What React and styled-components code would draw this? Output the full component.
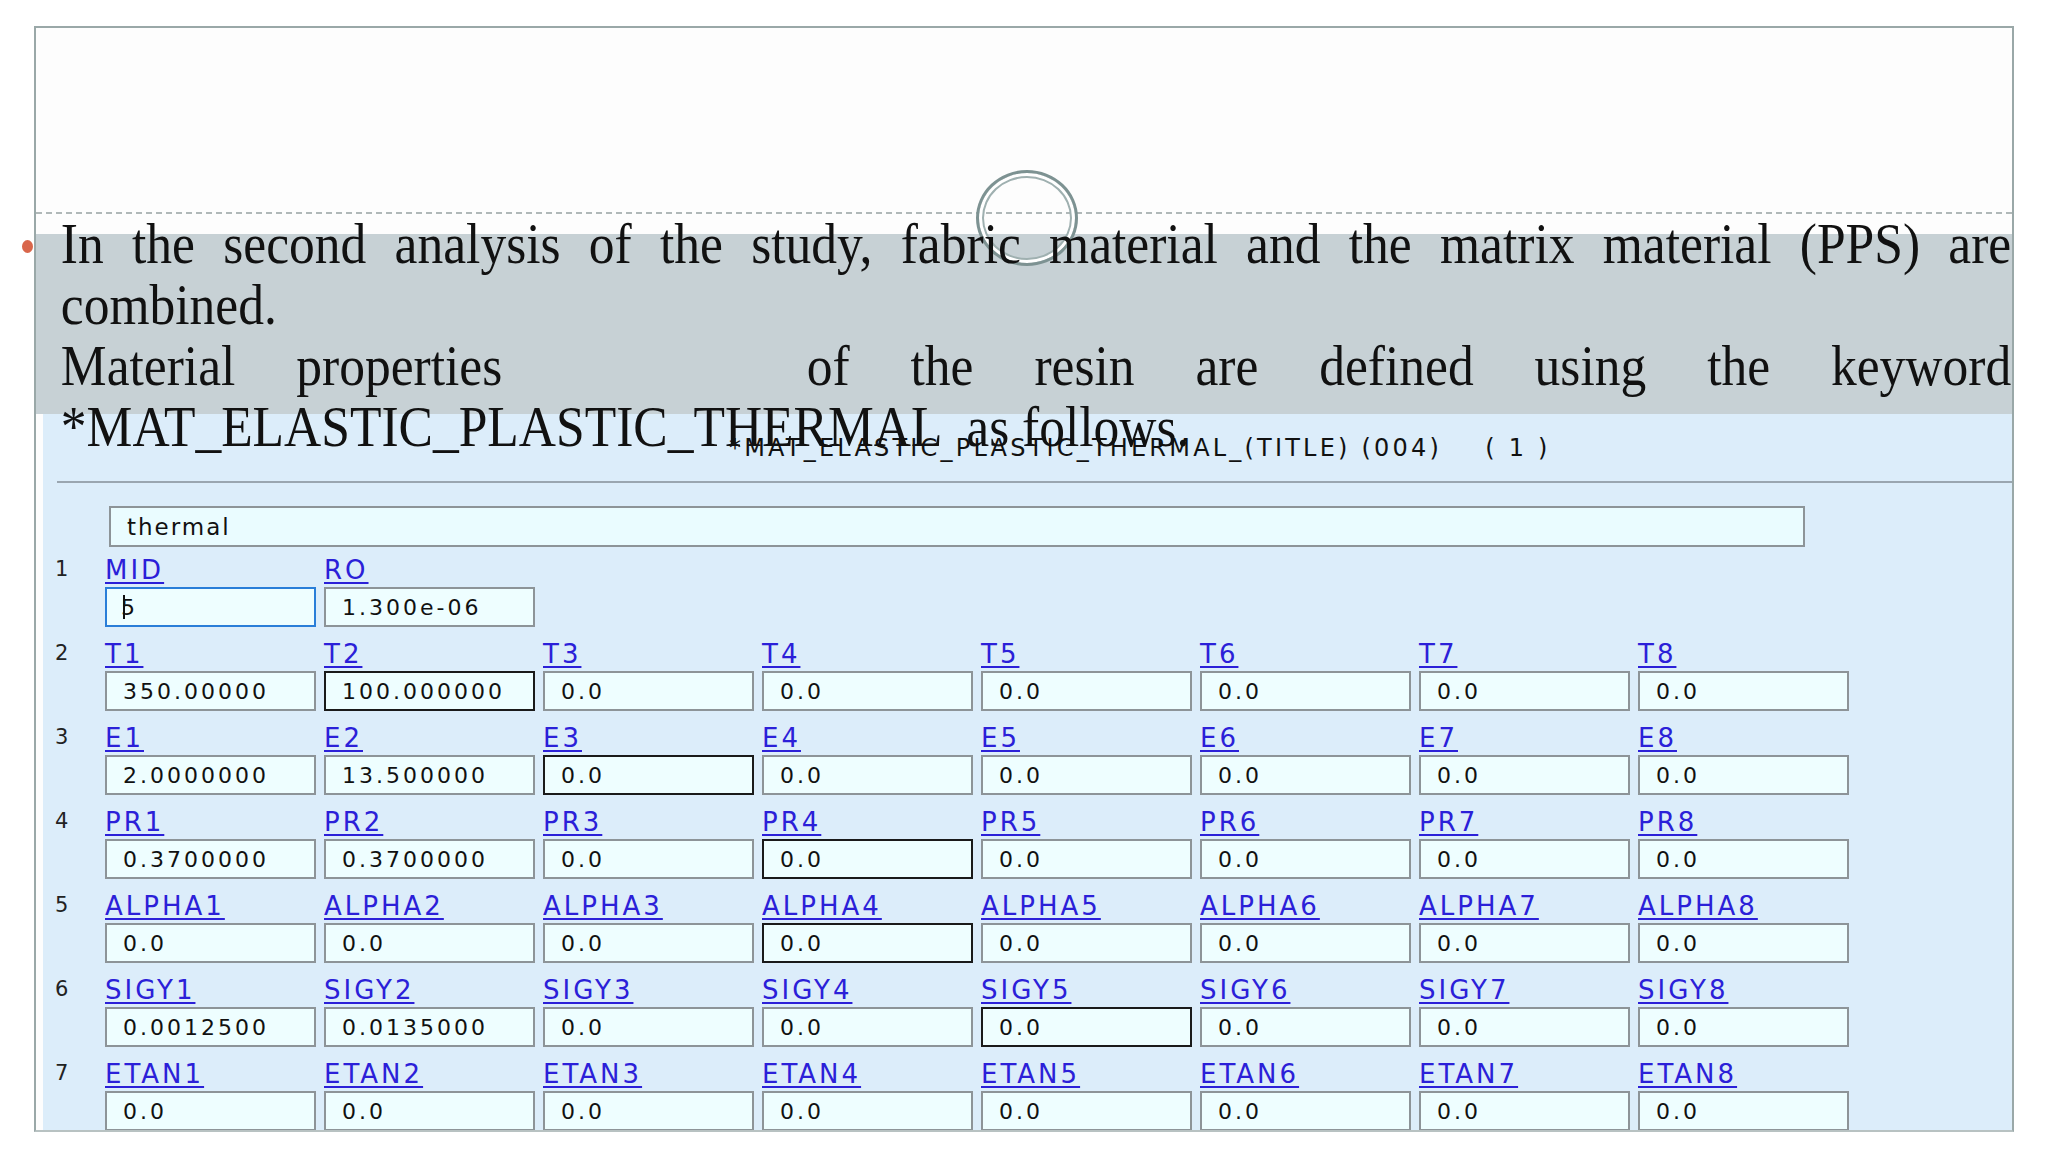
import React from 'react';
import styled, { createGlobalStyle } from 'styled-components';

const Global = createGlobalStyle`
  html, body { margin: 0; background: #ffffff; }
  body { width: 2048px; height: 1152px; overflow: hidden; }
`;

const Frame = styled.div`
  position: relative;
  margin: 26px 0 0 34px;
  width: 1980px;
  height: 1106px;
  box-sizing: border-box;
  border: 2px solid #9aa8a8;
  border-bottom-color: #b8c2c2;
  background: #fdfdfd;
  display: flex;
  flex-direction: column;
`;

const Header = styled.div`
  height: 184px;
  border-bottom: 2px dashed #b0b8b8;
  flex: none;
`;

const Ring = styled.div`
  position: absolute;
  left: 940px;
  top: 142px;
  width: 96px;
  height: 90px;
  border-radius: 50%;
  border: 3px solid #7d9292;
  box-shadow: inset 0 0 0 3px #ffffff, inset 0 0 0 5px #9fb0b0;
`;

const Bullet = styled.div`
  position: absolute;
  left: -14px;
  top: 212px;
  width: 11px;
  height: 13px;
  border-radius: 50%;
  background: #d9664b;
`;

const TextBand = styled.div`
  flex: none;
  height: 200px;
  background: linear-gradient(#fdfdfd 0 20px, #c7d1d5 20px);
`;

const Para = styled.div`
  width: 2120px;
  padding-left: 27px;
  transform: scaleX(0.92);
  transform-origin: left top;
  font-family: "Liberation Serif", "Times New Roman", serif;
  font-size: 56px;
  line-height: 61px;
  color: #111;
`;

const Line = styled.div`
  text-align: ${p => (p.$just ? 'justify' : 'left')};
  text-align-last: ${p => (p.$just ? 'justify' : 'left')};
  white-space: ${p => (p.$just ? 'normal' : 'pre')};
`;

const Panel = styled.div`
  flex: 1;
  margin-left: 7px;
  background: #dcedfa;
  overflow: hidden;
  font-family: "DejaVu Sans", Verdana, sans-serif;
`;

const Title = styled.div`
  height: 67px;
  margin-left: 14px;
  border-bottom: 2px solid #9aa6b0;
  padding-left: 672px;
  display: flex;
  align-items: center;
  font-size: 24px;
  letter-spacing: 3.2px;
  white-space: pre;
  color: #111;
`;

const NameBox = styled.div`
  margin: 23px 0 0 66px;
  width: 1696px;
  height: 41px;
  box-sizing: border-box;
  border: 2px solid #8d9498;
  background: #eafcff;
  padding-left: 16px;
  display: flex;
  align-items: center;
  font-size: 23px;
  letter-spacing: 2px;
  color: #111;
`;

const Rows = styled.div`
  padding: 10px 0 0 4px;
`;

const Row = styled.div`
  display: grid;
  grid-template-columns: 50px repeat(8, 211px);
  column-gap: 8px;
  row-gap: 4px;
  margin-bottom: 14px;
`;

const RowNum = styled.div`
  grid-row: 1;
  padding-left: 8px;
  font-size: 21px;
  color: #222;
`;

const Label = styled.a`
  grid-row: 1;
  font-size: 26px;
  line-height: 26px;
  letter-spacing: 3px;
  color: #2b20d8;
  text-decoration: underline;
  text-decoration-thickness: 2px;
  text-underline-offset: 3px;
`;

const Field = styled.div`
  grid-row: 2;
  height: 40px;
  box-sizing: border-box;
  border: 2px solid ${p => (p.$state === 'focus' ? '#2a7ed8' : p.$state === 'dark' ? '#1a1a1a' : '#8d9498')};
  background: #eefeff;
  padding-left: 16px;
  display: flex;
  align-items: center;
  font-size: 22px;
  letter-spacing: 3px;
  color: #111;
`;

const Caret = styled.span`
  display: inline-block;
  width: 2px;
  height: 24px;
  background: #111;
  margin-right: -4px;
`;

const rows = [
  { labels: ['MID', 'RO'], values: ['5', '1.300e-06'], states: ['focus'] },
  { p: 'T', values: ['350.00000', '100.000000'], states: [null, 'dark'] },
  { p: 'E', values: ['2.0000000', '13.500000'], states: [null, null, 'dark'] },
  { p: 'PR', values: ['0.3700000', '0.3700000'], states: [null, null, null, 'dark'] },
  { p: 'ALPHA', values: [], states: [null, null, null, 'dark'] },
  { p: 'SIGY', values: ['0.0012500', '0.0135000'], states: [null, null, null, null, 'dark'] },
  { p: 'ETAN', values: [], states: [] },
];

export default function App() {
  return (
    <>
      <Global />
      <Frame>
        <Header />
        <Ring />
        <Bullet />
        <TextBand>
          <Para>
            <Line $just>In the second analysis of the study, fabric material and the matrix material (PPS) are combined.</Line>
            <Line $just>Material properties &nbsp;&nbsp;&nbsp;&nbsp;of the resin are defined using the keyword</Line>
            <Line>*MAT_ELASTIC_PLASTIC_THERMAL  as follows.</Line>
          </Para>
        </TextBand>
        <Panel>
          <Title>*MAT_ELASTIC_PLASTIC_THERMAL_(TITLE) (004)    ( 1 )</Title>
          <NameBox>thermal</NameBox>
          <Rows>
            {rows.map((r, i) => {
              const labels = r.labels || Array.from({ length: 8 }, (_, k) => `${r.p}${k + 1}`);
              return (
                <Row key={i}>
                  <RowNum>{i + 1}</RowNum>
                  {labels.map(l => (
                    <Label key={l}>{l}</Label>
                  ))}
                  <span style={{ gridRow: 2 }} />
                  {labels.map((l, k) => (
                    <Field key={l} $state={r.states[k]}>
                      {r.states[k] === 'focus' && <Caret />}
                      {r.values[k] || '0.0'}
                    </Field>
                  ))}
                </Row>
              );
            })}
          </Rows>
        </Panel>
      </Frame>
    </>
  );
}
